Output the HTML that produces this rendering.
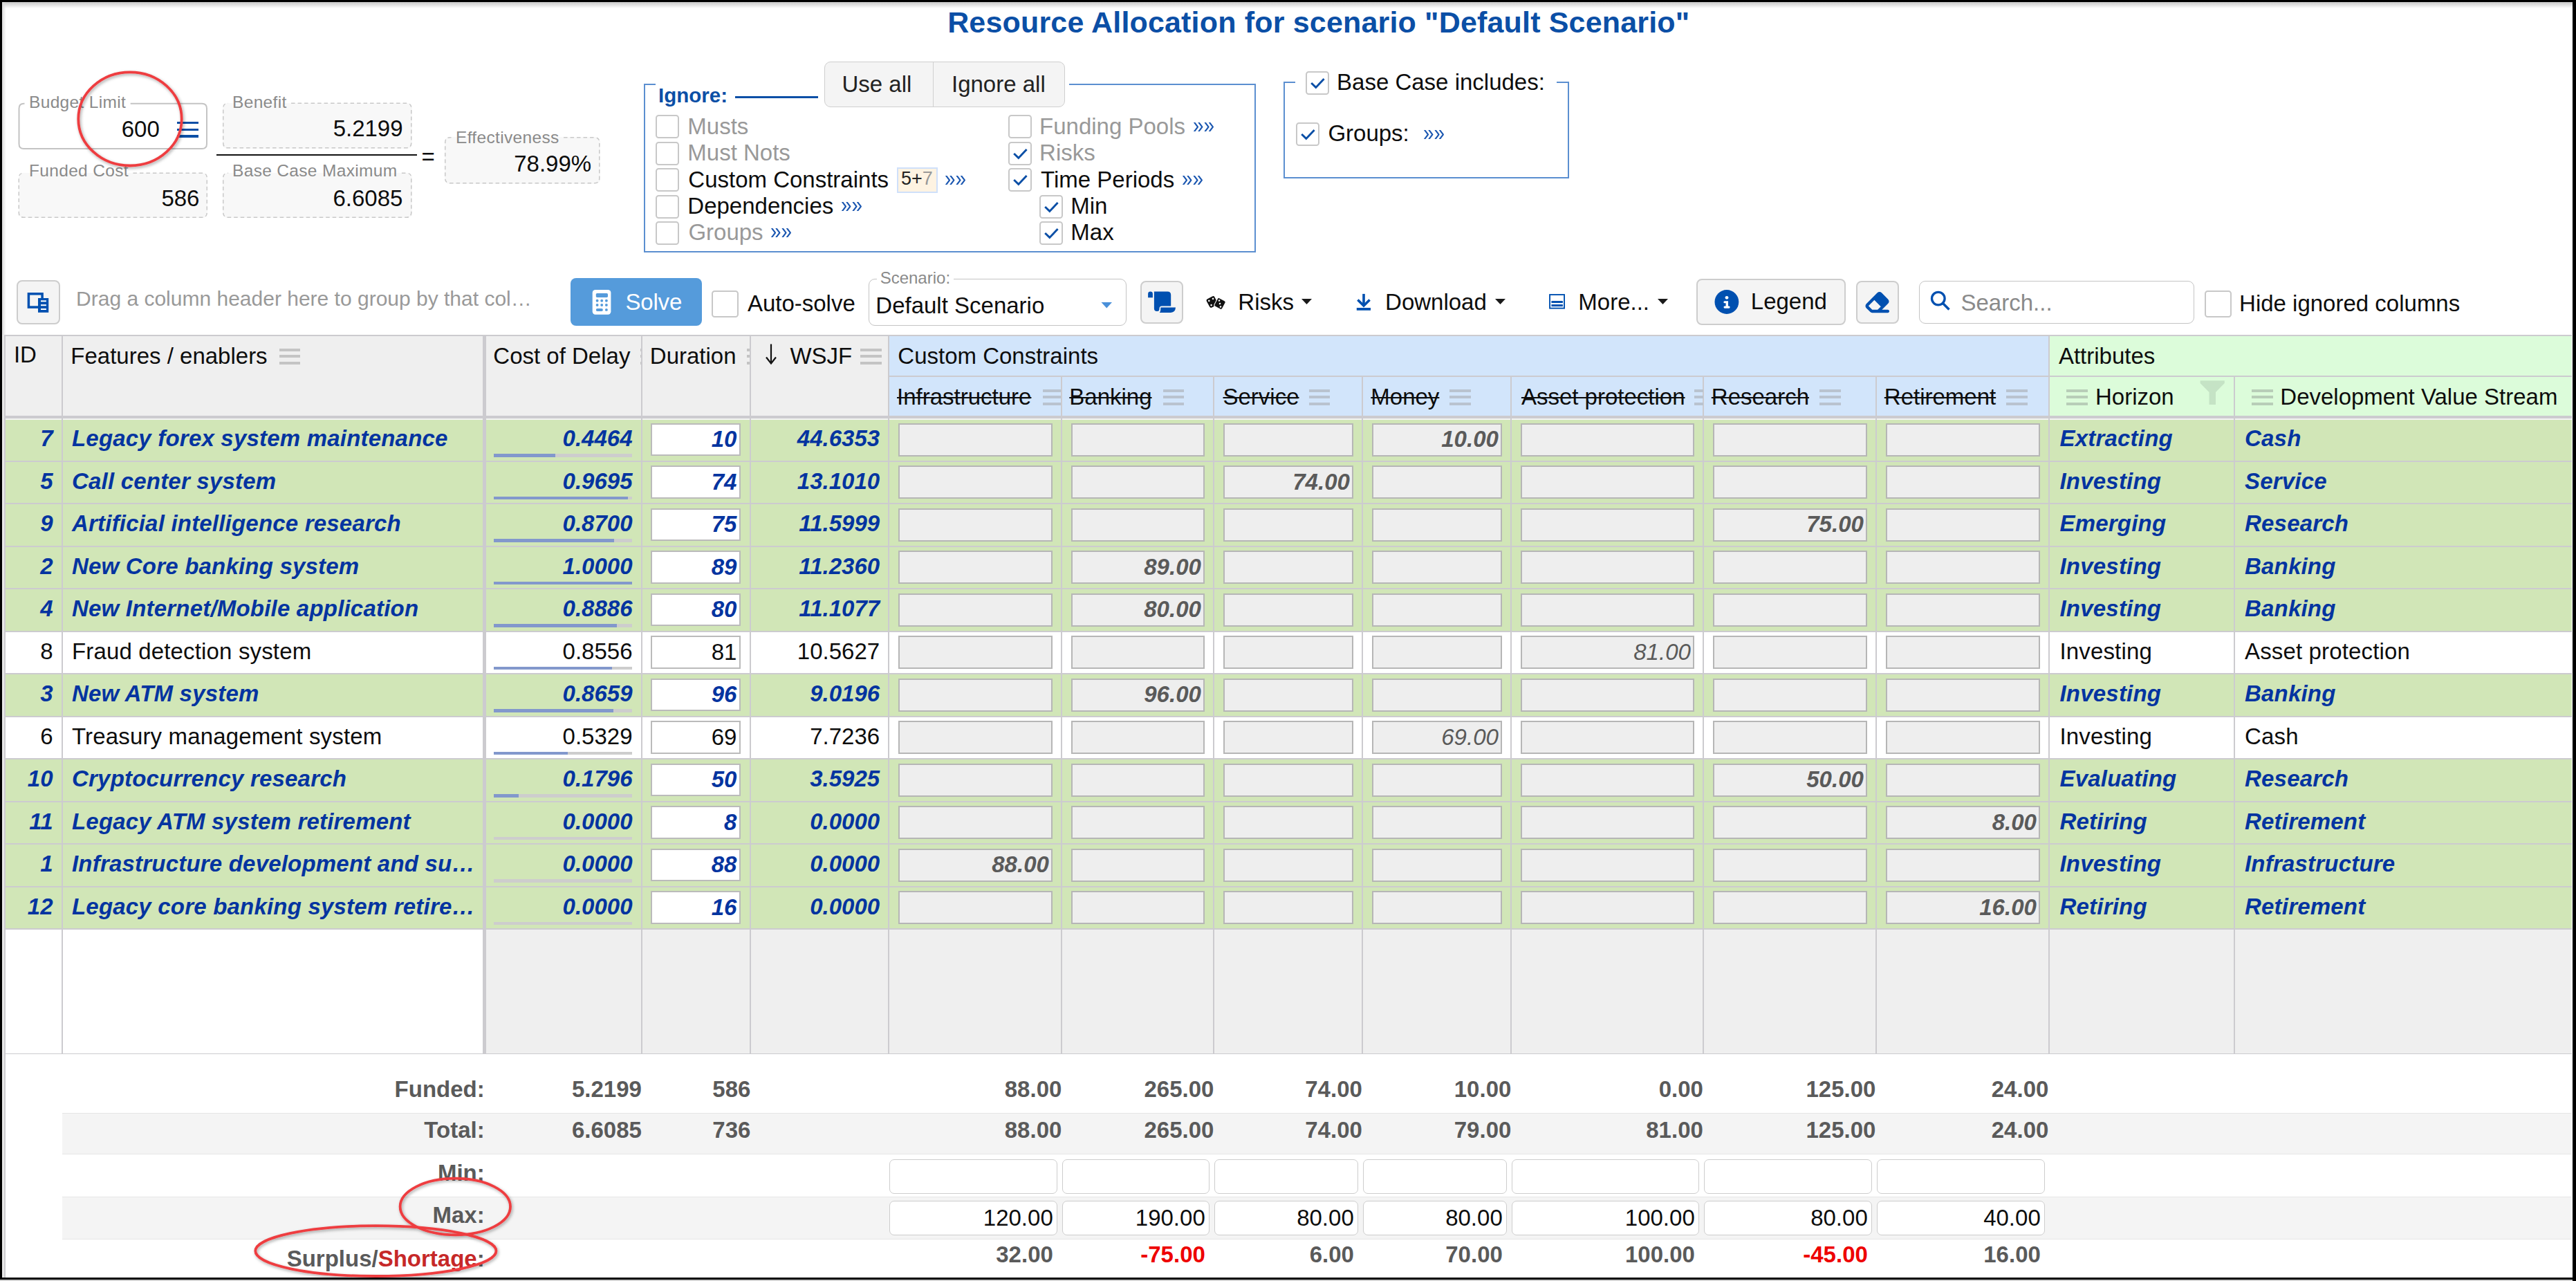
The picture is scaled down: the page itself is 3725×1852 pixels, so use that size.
<!DOCTYPE html>
<html><head><meta charset="utf-8"><title>Resource Allocation</title>
<style>
html,body{margin:0;padding:0;}
body{position:relative;width:3725px;height:1852px;overflow:hidden;background:#fff;font-family:"Liberation Sans", sans-serif;}
.t{position:absolute;white-space:nowrap;}
.r{position:absolute;box-sizing:border-box;}
</style></head><body>
<div class="t" style="top:11.4px;font-size:43px;line-height:43px;color:#0b4fa6;font-weight:bold;left:1370.13px;letter-spacing:0.175px;">Resource Allocation for scenario "Default Scenario"</div>
<div class="r" style="left:26.5px;top:148.75px;width:273.5px;height:67.25px;border-radius:7px;background:#fff;"></div>
<svg class="r" style="left:0;top:0" width="1000" height="340" viewBox="0 0 1000 340"><path d="M188.64 149.75 L292 149.75 Q299 149.75 299 156.75 L299 208 Q299 215 292 215 L34.5 215 Q27.5 215 27.5 208 L27.5 156.75 Q27.5 149.75 34.5 149.75 L35.5 149.75" fill="none" stroke="#c4c4c4" stroke-width="2" /></svg>
<div class="t" style="top:136.26px;font-size:24.5px;line-height:24.5px;color:#8a8a8a;left:42px;letter-spacing:0.33px;">Budget Limit</div>
<div class="t" style="top:170.07px;font-size:33px;line-height:33px;color:#0d0d0d;right:3494.25px;">600</div>
<div class="r" style="left:255.6px;top:175.9px;width:31.1px;height:3.5px;background:#0b4fa6;"></div>
<div class="r" style="left:255.6px;top:185.5px;width:31.1px;height:3.5px;background:#0b4fa6;"></div>
<div class="r" style="left:255.6px;top:195.1px;width:31.1px;height:3.5px;background:#0b4fa6;"></div>
<div class="r" style="left:26.5px;top:249.5px;width:273.5px;height:65.5px;border-radius:7px;background:#f8f8f8;"></div>
<svg class="r" style="left:0;top:0" width="1000" height="340" viewBox="0 0 1000 340"><path d="M192.4 250.25 L292.25 250.25 Q299.25 250.25 299.25 257.25 L299.25 307.25 Q299.25 314.25 292.25 314.25 L34.25 314.25 Q27.25 314.25 27.25 307.25 L27.25 257.25 Q27.25 250.25 34.25 250.25 L35.5 250.25" fill="none" stroke="#c9c9c9" stroke-width="1.5" stroke-dasharray="5.5 4"/></svg>
<div class="t" style="top:235.26px;font-size:24.5px;line-height:24.5px;color:#8a8a8a;left:42px;letter-spacing:0.33px;">Funded Cost</div>
<div class="t" style="top:270.07px;font-size:33px;line-height:33px;color:#0d0d0d;right:3436.55px;">586</div>
<div class="r" style="left:322px;top:148.5px;width:273.5px;height:66px;border-radius:7px;background:#f8f8f8;"></div>
<svg class="r" style="left:0;top:0" width="1000" height="340" viewBox="0 0 1000 340"><path d="M421.08 149.25 L587.75 149.25 Q594.75 149.25 594.75 156.25 L594.75 206.75 Q594.75 213.75 587.75 213.75 L329.75 213.75 Q322.75 213.75 322.75 206.75 L322.75 156.25 Q322.75 149.25 329.75 149.25 L329.5 149.25" fill="none" stroke="#c9c9c9" stroke-width="1.5" stroke-dasharray="5.5 4"/></svg>
<div class="t" style="top:135.76px;font-size:24.5px;line-height:24.5px;color:#8a8a8a;left:336px;letter-spacing:0.33px;">Benefit</div>
<div class="t" style="top:169.07px;font-size:33px;line-height:33px;color:#0d0d0d;right:3142.45px;">5.2199</div>
<div class="r" style="left:322px;top:249.5px;width:273.5px;height:65.5px;border-radius:7px;background:#f8f8f8;"></div>
<svg class="r" style="left:0;top:0" width="1000" height="340" viewBox="0 0 1000 340"><path d="M580.93 250.25 L587.75 250.25 Q594.75 250.25 594.75 257.25 L594.75 307.25 Q594.75 314.25 587.75 314.25 L329.75 314.25 Q322.75 314.25 322.75 307.25 L322.75 257.25 Q322.75 250.25 329.75 250.25 L329.5 250.25" fill="none" stroke="#c9c9c9" stroke-width="1.5" stroke-dasharray="5.5 4"/></svg>
<div class="t" style="top:235.26px;font-size:24.5px;line-height:24.5px;color:#8a8a8a;left:336px;letter-spacing:0.33px;">Base Case Maximum</div>
<div class="t" style="top:270.07px;font-size:33px;line-height:33px;color:#0d0d0d;right:3142.65px;">6.6085</div>
<div class="r" style="left:312.5px;top:222.8px;width:290.5px;height:2px;background:#111;"></div>
<div class="t" style="top:210.07px;font-size:33px;line-height:33px;color:#0d0d0d;left:609.4px;">=</div>
<div class="r" style="left:643px;top:198px;width:224.5px;height:67.5px;border-radius:7px;background:#f8f8f8;"></div>
<svg class="r" style="left:0;top:0" width="1000" height="340" viewBox="0 0 1000 340"><path d="M815.05 198.75 L859.75 198.75 Q866.75 198.75 866.75 205.75 L866.75 257.75 Q866.75 264.75 859.75 264.75 L650.75 264.75 Q643.75 264.75 643.75 257.75 L643.75 205.75 Q643.75 198.75 650.75 198.75 L652.5 198.75" fill="none" stroke="#c9c9c9" stroke-width="1.5" stroke-dasharray="5.5 4"/></svg>
<div class="t" style="top:186.76px;font-size:24.5px;line-height:24.5px;color:#8a8a8a;left:659px;letter-spacing:0.33px;">Effectiveness</div>
<div class="t" style="top:220.07px;font-size:33px;line-height:33px;color:#0d0d0d;right:2869.86px;">78.99%</div>
<div class="r" style="left:931px;top:121px;width:2px;height:243.5px;background:#5b8fd0;"></div>
<div class="r" style="left:931px;top:362.5px;width:885px;height:2px;background:#5b8fd0;"></div>
<div class="r" style="left:1814px;top:121px;width:2px;height:243.5px;background:#5b8fd0;"></div>
<div class="r" style="left:931px;top:121px;width:17px;height:2px;background:#5b8fd0;"></div>
<div class="r" style="left:1545.5px;top:121px;width:270.5px;height:2px;background:#5b8fd0;"></div>
<div class="t" style="top:123.03px;font-size:29.5px;line-height:29.5px;color:#0b4fa6;font-weight:bold;left:952.03px;">Ignore:</div>
<div class="r" style="left:1063px;top:138.5px;width:120px;height:3px;background:#0b4fa6;"></div>
<div class="r" style="left:1191.75px;top:88.75px;width:348.25px;height:66.25px;border:1.5px solid #cfcfcf;border-radius:9px;background:#f4f4f4;"></div>
<div class="r" style="left:1348.5px;top:89.5px;width:1.5px;height:65px;background:#d0d0d0;"></div>
<div class="t" style="top:105.07px;font-size:33px;line-height:33px;color:#222;left:1217.5px;">Use all</div>
<div class="t" style="top:105.07px;font-size:33px;line-height:33px;color:#222;left:1376px;">Ignore all</div>
<div class="r" style="left:948px;top:166px;width:34.4px;height:34.4px;border:2px solid #c8c8c8;border-radius:4.5px;background:#fff;"></div>
<div class="t" style="top:165.82px;font-size:33px;line-height:33px;color:#999999;left:994.3px;">Musts</div>
<div class="r" style="left:948px;top:204.5px;width:34.4px;height:34.4px;border:2px solid #c8c8c8;border-radius:4.5px;background:#fff;"></div>
<div class="t" style="top:203.57px;font-size:33px;line-height:33px;color:#999999;left:994.3px;">Must Nots</div>
<div class="r" style="left:948px;top:243px;width:34.4px;height:34.4px;border:2px solid #c8c8c8;border-radius:4.5px;background:#fff;"></div>
<div class="t" style="top:242.57px;font-size:33px;line-height:33px;color:#0d0d0d;left:995.3px;">Custom Constraints</div>
<div class="r" style="left:948px;top:281.5px;width:34.4px;height:34.4px;border:2px solid #c8c8c8;border-radius:4.5px;background:#fff;"></div>
<div class="t" style="top:280.57px;font-size:33px;line-height:33px;color:#0d0d0d;left:994.3px;">Dependencies <span style="color:#1a56b0;display:inline-block;transform:scaleX(0.845);transform-origin:0 0;margin-left:1.5px;position:relative;top:-1.5px">&raquo;&raquo;</span></div>
<div class="r" style="left:948px;top:320px;width:34.4px;height:34.4px;border:2px solid #c8c8c8;border-radius:4.5px;background:#fff;"></div>
<div class="t" style="top:318.57px;font-size:33px;line-height:33px;color:#999999;left:995.4px;">Groups <span style="color:#1a56b0;display:inline-block;transform:scaleX(0.845);transform-origin:0 0;margin-left:1.5px;position:relative;top:-1.5px">&raquo;&raquo;</span></div>
<div class="r" style="left:1297.3px;top:242px;width:58.5px;height:36.6px;background:#fef3e2;border:2px solid #cfe0fa;"></div>
<div class="t" style="top:244.64px;font-size:27px;line-height:27px;color:#222;left:1302.94px;">5+<span style="color:#999">7</span></div>
<div class="t" style="top:241.07px;font-size:33px;line-height:33px;color:#1a56b0;left:1366.2px;transform:scaleX(0.845);transform-origin:0 0;">&raquo;&raquo;</div>
<div class="r" style="left:1457.5px;top:166px;width:34.4px;height:34.4px;border:2px solid #c8c8c8;border-radius:4.5px;background:#fff;"></div>
<div class="t" style="top:165.82px;font-size:33px;line-height:33px;color:#999999;left:1503.05px;">Funding Pools <span style="color:#1a56b0;display:inline-block;transform:scaleX(0.845);transform-origin:0 0;margin-left:1.5px;position:relative;top:-1.5px">&raquo;&raquo;</span></div>
<div class="r" style="left:1457.5px;top:204.5px;width:34.4px;height:34.4px;border:2px solid #c8c8c8;border-radius:4.5px;background:#fff;"></div>
<svg class="r" style="left:1457.5px;top:204.5px;" width="34.4" height="34.4" viewBox="0 0 34.4 34.4"><path d="M8.2 17 L14.8 23.4 L26.6 11" fill="none" stroke="#0b4fa6" stroke-width="2.9" stroke-linecap="butt" stroke-linejoin="miter"/></svg>
<div class="t" style="top:203.57px;font-size:33px;line-height:33px;color:#999999;left:1503.05px;">Risks</div>
<div class="r" style="left:1457.5px;top:243px;width:34.4px;height:34.4px;border:2px solid #c8c8c8;border-radius:4.5px;background:#fff;"></div>
<svg class="r" style="left:1457.5px;top:243px;" width="34.4" height="34.4" viewBox="0 0 34.4 34.4"><path d="M8.2 17 L14.8 23.4 L26.6 11" fill="none" stroke="#0b4fa6" stroke-width="2.9" stroke-linecap="butt" stroke-linejoin="miter"/></svg>
<div class="t" style="top:242.57px;font-size:33px;line-height:33px;color:#0d0d0d;left:1505.05px;">Time Periods <span style="color:#1a56b0;display:inline-block;transform:scaleX(0.845);transform-origin:0 0;margin-left:1.5px;position:relative;top:-1.5px">&raquo;&raquo;</span></div>
<div class="r" style="left:1502.5px;top:281.5px;width:34.4px;height:34.4px;border:2px solid #c8c8c8;border-radius:4.5px;background:#fff;"></div>
<svg class="r" style="left:1502.5px;top:281.5px;" width="34.4" height="34.4" viewBox="0 0 34.4 34.4"><path d="M8.2 17 L14.8 23.4 L26.6 11" fill="none" stroke="#0b4fa6" stroke-width="2.9" stroke-linecap="butt" stroke-linejoin="miter"/></svg>
<div class="t" style="top:280.57px;font-size:33px;line-height:33px;color:#0d0d0d;left:1548.3px;">Min</div>
<div class="r" style="left:1502.5px;top:320px;width:34.4px;height:34.4px;border:2px solid #c8c8c8;border-radius:4.5px;background:#fff;"></div>
<svg class="r" style="left:1502.5px;top:320px;" width="34.4" height="34.4" viewBox="0 0 34.4 34.4"><path d="M8.2 17 L14.8 23.4 L26.6 11" fill="none" stroke="#0b4fa6" stroke-width="2.9" stroke-linecap="butt" stroke-linejoin="miter"/></svg>
<div class="t" style="top:318.57px;font-size:33px;line-height:33px;color:#0d0d0d;left:1548.3px;">Max</div>
<div class="r" style="left:1855.5px;top:118px;width:2px;height:140px;background:#5b8fd0;"></div>
<div class="r" style="left:1855.5px;top:256px;width:413.5px;height:2px;background:#5b8fd0;"></div>
<div class="r" style="left:2267px;top:118px;width:2px;height:140px;background:#5b8fd0;"></div>
<div class="r" style="left:1855.5px;top:118px;width:17.5px;height:2px;background:#5b8fd0;"></div>
<div class="r" style="left:2251px;top:118px;width:18px;height:2px;background:#5b8fd0;"></div>
<div class="r" style="left:1887.75px;top:102.5px;width:34.4px;height:34.4px;border:2px solid #c8c8c8;border-radius:4.5px;background:#fff;"></div>
<svg class="r" style="left:1887.75px;top:102.5px;" width="34.4" height="34.4" viewBox="0 0 34.4 34.4"><path d="M8.2 17 L14.8 23.4 L26.6 11" fill="none" stroke="#0b4fa6" stroke-width="2.9" stroke-linecap="butt" stroke-linejoin="miter"/></svg>
<div class="t" style="top:102.07px;font-size:33px;line-height:33px;color:#0d0d0d;left:1933.05px;">Base Case includes:</div>
<div class="r" style="left:1873.5px;top:176.5px;width:34.4px;height:34.4px;border:2px solid #c8c8c8;border-radius:4.5px;background:#fff;"></div>
<svg class="r" style="left:1873.5px;top:176.5px;" width="34.4" height="34.4" viewBox="0 0 34.4 34.4"><path d="M8.2 17 L14.8 23.4 L26.6 11" fill="none" stroke="#0b4fa6" stroke-width="2.9" stroke-linecap="butt" stroke-linejoin="miter"/></svg>
<div class="t" style="top:176.07px;font-size:33px;line-height:33px;color:#0d0d0d;left:1920.4px;">Groups:</div>
<div class="t" style="top:174.57px;font-size:33px;line-height:33px;color:#1a56b0;left:2057.95px;transform:scaleX(0.845);transform-origin:0 0;">&raquo;&raquo;</div>
<div class="r" style="left:23.5px;top:405.25px;width:63.25px;height:63.25px;border:2px solid #cdcdcd;border-radius:8px;background:#f4f4f4;"></div>
<svg class="r" style="left:0;top:0" width="100" height="480" viewBox="0 0 100 480"><rect x="41.4" y="424.8" width="19.7" height="19.3" fill="none" stroke="#0050b0" stroke-width="3.5"/><rect x="55" y="431" width="15.25" height="20.8" fill="#0050b0"/><rect x="59" y="434.3" width="7.9" height="2" fill="#fff"/><rect x="59" y="440.2" width="7.9" height="2" fill="#fff"/><rect x="59" y="446" width="7.9" height="2" fill="#fff"/></svg>
<div class="t" style="top:416.61px;font-size:30px;line-height:30px;color:#999999;left:110.05px;">Drag a column header here to group by that col…</div>
<div class="r" style="left:825px;top:402px;width:190px;height:69px;border-radius:8px;background:#559bdb;"></div>
<svg class="r" style="left:850px;top:415px" width="40" height="45" viewBox="850 415 40 45"><rect x="856.7" y="419" width="26.7" height="35.7" rx="4.2" fill="#fff"/><rect x="861.8" y="424" width="17.2" height="5.9" rx="1.6" fill="#559bdb"/><circle cx="863.6" cy="434.7" r="1.95" fill="#559bdb"/><circle cx="870.2" cy="434.7" r="1.95" fill="#559bdb"/><circle cx="876.9" cy="434.7" r="1.95" fill="#559bdb"/><circle cx="863.6" cy="441" r="1.95" fill="#559bdb"/><circle cx="870.2" cy="441" r="1.95" fill="#559bdb"/><circle cx="876.9" cy="441" r="1.95" fill="#559bdb"/><rect x="861.8" y="445.9" width="10.1" height="4" rx="2" fill="#559bdb"/><circle cx="876.9" cy="447.9" r="1.95" fill="#559bdb"/></svg>
<div class="t" style="top:419.57px;font-size:33px;line-height:33px;color:#fff;left:904.5px;letter-spacing:-0.2px;">Solve</div>
<div class="r" style="left:1028.5px;top:420px;width:39px;height:39px;border:2px solid #c8c8c8;border-radius:4.5px;background:#fff;"></div>
<div class="t" style="top:422.07px;font-size:33px;line-height:33px;color:#0d0d0d;left:1080.9px;">Auto-solve</div>
<div class="r" style="left:1255.75px;top:403px;width:373.25px;height:68px;border:1.5px solid #c4c4c4;border-radius:9px;background:#fff;"></div>
<div class="t" style="top:390.18px;font-size:24px;line-height:24px;color:#8a8a8a;left:1272.66px;background:#fff;padding:0 5px;margin-left:-5px;">Scenario:</div>
<div class="t" style="top:424.57px;font-size:33px;line-height:33px;color:#0d0d0d;left:1266.3px;">Default Scenario</div>
<svg class="r" style="left:1590px;top:435px" width="20" height="12" viewBox="1590 435 20 12"><path d="M1592.5 437 L1608 437 L1600.25 445.5 Z" fill="#4a90d9"/></svg>
<div class="r" style="left:1648.75px;top:405.75px;width:62.25px;height:62.25px;border:2px solid #cdcdcd;border-radius:8px;background:#f4f4f4;"></div>
<svg class="r" style="left:1655px;top:415px" width="50" height="42" viewBox="1655 415 50 42"><path d="M1660.1 430.2 L1660.1 425 Q1660.1 421.6 1663.5 421.6 Q1666.9 421.6 1666.9 425 L1666.9 430.2 Z" fill="#0050b0"/><path d="M1668.9 421.6 L1688.2 421.6 Q1693.2 421.6 1693.2 426.6 L1693.2 442.5 L1680 442.5 Q1676.5 442.5 1676.5 446 L1676.5 446.5 Q1676.5 450 1673.5 450 L1672.9 450 Q1668.9 450 1668.9 446 Z" fill="#0050b0"/><path d="M1678.3 444.6 L1700 444.6 Q1699.5 451.9 1693 451.9 L1676.8 451.9 Q1678.3 450 1678.3 447 Z" fill="#0050b0"/></svg>
<svg class="r" style="left:1740px;top:420px" width="40" height="34" viewBox="1740 420 40 34"><g transform="rotate(-28 1753 437)"><rect x="1746.5" y="429.5" width="13" height="14" rx="2.5" fill="#111"/><circle cx="1749.8" cy="433" r="1.3" fill="#fff"/><circle cx="1756.3" cy="433" r="1.3" fill="#fff"/><circle cx="1749.8" cy="440" r="1.3" fill="#fff"/></g><g transform="rotate(28 1764 439)"><rect x="1757.5" y="432" width="13" height="14" rx="2.5" fill="#111" stroke="#fff" stroke-width="1"/><circle cx="1761" cy="435.5" r="1.3" fill="#fff"/><circle cx="1764" cy="439" r="1.3" fill="#fff"/><circle cx="1767" cy="442.5" r="1.3" fill="#fff"/></g></svg>
<div class="t" style="top:419.57px;font-size:33px;line-height:33px;color:#0d0d0d;left:1790.3px;">Risks</div>
<svg class="r" style="left:1881px;top:431px" width="18" height="11" viewBox="1881 431 18 11"><path d="M1882 432 L1897 432 L1889.5 440 Z" fill="#1a1a1a"/></svg>
<svg class="r" style="left:1958px;top:420px" width="28" height="32" viewBox="1958 420 28 32"><rect x="1970.2" y="424.9" width="3.6" height="15" fill="#0050b0"/><path d="M1963.4 433.5 L1972 442 L1980.6 433.5" fill="none" stroke="#0050b0" stroke-width="3.6"/><rect x="1961.8" y="445" width="20.2" height="3.75" fill="#0050b0"/></svg>
<div class="t" style="top:419.57px;font-size:33px;line-height:33px;color:#0d0d0d;left:2003.05px;">Download</div>
<svg class="r" style="left:2160.75px;top:431px" width="18" height="11" viewBox="2160.75 431 18 11"><path d="M2161.75 432 L2176.75 432 L2169.25 440 Z" fill="#1a1a1a"/></svg>
<svg class="r" style="left:2236px;top:420px" width="32" height="30" viewBox="2236 420 32 30"><rect x="2241.05" y="426.05" width="21" height="19.6" fill="none" stroke="#0050b0" stroke-width="1.9"/><rect x="2243.4" y="435" width="16.5" height="3" fill="#0050b0"/><rect x="2243.4" y="440.1" width="16.5" height="3" fill="#0050b0"/></svg>
<div class="t" style="top:419.57px;font-size:33px;line-height:33px;color:#0d0d0d;left:2282.3px;">More...</div>
<svg class="r" style="left:2396px;top:431px" width="18" height="11" viewBox="2396 431 18 11"><path d="M2397 432 L2412 432 L2404.5 440 Z" fill="#1a1a1a"/></svg>
<div class="r" style="left:2452.5px;top:402.5px;width:216.5px;height:67.5px;border:2px solid #cdcdcd;border-radius:8px;background:#f4f4f4;"></div>
<svg class="r" style="left:2475px;top:415px" width="44" height="44" viewBox="2475 415 44 44"><circle cx="2496.9" cy="436.5" r="17.4" fill="#0050b0"/><circle cx="2497" cy="430.3" r="2.4" fill="#fff"/><path d="M2493.8 435.2 L2499 435.2 L2499 442.5 L2500.2 442.5 Q2501.6 442.5 2501.6 444.1 Q2501.6 445.7 2500.2 445.7 L2494 445.7 Q2492.5 445.7 2492.5 444.1 Q2492.5 442.5 2494 442.5 L2495.6 442.5 L2495.6 438.3 L2493.8 438.3 Q2492.4 438.3 2492.4 436.75 Q2492.4 435.2 2493.8 435.2 Z" fill="#fff"/></svg>
<div class="t" style="top:419.07px;font-size:33px;line-height:33px;color:#0d0d0d;left:2531.8px;">Legend</div>
<div class="r" style="left:2683.75px;top:405.75px;width:62.25px;height:62.25px;border:2px solid #cdcdcd;border-radius:8px;background:#f4f4f4;"></div>
<svg class="r" style="left:2690px;top:414px" width="50" height="46" viewBox="2690 414 50 46"><g transform="translate(2694.86 419.36) scale(0.0683)"><path d="M290.7 57.4L57.4 290.7c-25 25-25 65.5 0 90.5l80 80c12 12 28.3 18.7 45.3 18.7H288h9.4H512c17.7 0 32-14.3 32-32s-14.3-32-32-32H387.9L518.6 285.3c25-25 25-65.5 0-90.5L381.3 57.4c-25-25-65.5-25-90.5 0zM297.4 416H288l-105.4 0-80-80L227.3 211.3 364.7 348.7 297.4 416z" fill="#0050b0"/></g></svg>
<div class="r" style="left:2774.5px;top:405.75px;width:398.75px;height:62.25px;border:1.5px solid #c4c4c4;border-radius:9px;background:#fff;"></div>
<svg class="r" style="left:2786px;top:416px" width="40" height="38" viewBox="2786 416 40 38"><circle cx="2802.8" cy="431.6" r="9.3" fill="none" stroke="#0050b0" stroke-width="3.3"/><path d="M2809.5 438.5 L2818.5 447.5" stroke="#0050b0" stroke-width="3.6"/></svg>
<div class="t" style="top:420.82px;font-size:33px;line-height:33px;color:#8a8a8a;left:2835.5px;">Search...</div>
<div class="r" style="left:3187.5px;top:419.5px;width:39px;height:39px;border:2px solid #c8c8c8;border-radius:4.5px;background:#fff;"></div>
<div class="t" style="top:422.07px;font-size:33px;line-height:33px;color:#0d0d0d;left:3238.05px;">Hide ignored columns</div>
<div class="r" style="left:8px;top:486px;width:1276px;height:115px;background:#efefef;"></div>
<div class="r" style="left:1286px;top:486px;width:1676px;height:115px;background:#d2e5fb;"></div>
<div class="r" style="left:2964px;top:486px;width:754.5px;height:115px;background:#dcfcda;"></div>
<div class="r" style="left:1286px;top:543px;width:2432.5px;height:2px;background:#cccbcf;"></div>
<div class="r" style="left:8px;top:606px;width:3710.5px;height:59.5px;background:#d1e6b7;"></div>
<div class="r" style="left:8px;top:665.5px;width:3710.5px;height:2px;background:#cccbcf;"></div>
<div class="t" style="top:617.07px;font-size:33px;line-height:33px;color:#0434a0;font-weight:bold;font-style:italic;right:3648.5px;">7</div>
<div class="t" style="top:617.07px;font-size:33px;line-height:33px;color:#0434a0;font-weight:bold;font-style:italic;left:104px;letter-spacing:0.2px;">Legacy forex system maintenance</div>
<div class="t" style="top:617.07px;font-size:33px;line-height:33px;color:#0434a0;font-weight:bold;font-style:italic;right:2810.5px;">0.4464</div>
<div class="r" style="left:713.75px;top:656px;width:200.5px;height:4.75px;background:#cdcdcd;"></div>
<div class="r" style="left:713.75px;top:656px;width:89.5px;height:4.75px;background:#8298cc;"></div>
<div class="r" style="left:941.25px;top:611.5px;width:130px;height:47.75px;background:#fff;border:2px solid #bbbbbb;"></div>
<div class="t" style="top:618.07px;font-size:33px;line-height:33px;color:#0434a0;font-weight:bold;font-style:italic;right:2659.65px;">10</div>
<div class="t" style="top:617.07px;font-size:33px;line-height:33px;color:#0434a0;font-weight:bold;font-style:italic;right:2452.9px;">44.6353</div>
<div class="r" style="left:1299px;top:611.5px;width:223px;height:48px;background:#eeeeee;border:2px solid #b6b6b6;"></div>
<div class="r" style="left:1549px;top:611.5px;width:193px;height:48px;background:#eeeeee;border:2px solid #b6b6b6;"></div>
<div class="r" style="left:1769px;top:611.5px;width:188px;height:48px;background:#eeeeee;border:2px solid #b6b6b6;"></div>
<div class="r" style="left:1984px;top:611.5px;width:188px;height:48px;background:#eeeeee;border:2px solid #b6b6b6;"></div>
<div class="t" style="top:618.07px;font-size:33px;line-height:33px;color:#5a5a5a;font-weight:bold;font-style:italic;right:1558.15px;">10.00</div>
<div class="r" style="left:2199px;top:611.5px;width:251px;height:48px;background:#eeeeee;border:2px solid #b6b6b6;"></div>
<div class="r" style="left:2477px;top:611.5px;width:223px;height:48px;background:#eeeeee;border:2px solid #b6b6b6;"></div>
<div class="r" style="left:2727px;top:611.5px;width:223px;height:48px;background:#eeeeee;border:2px solid #b6b6b6;"></div>
<div class="t" style="top:617.07px;font-size:33px;line-height:33px;color:#0434a0;font-weight:bold;font-style:italic;left:2978.5px;letter-spacing:0.2px;">Extracting</div>
<div class="t" style="top:617.07px;font-size:33px;line-height:33px;color:#0434a0;font-weight:bold;font-style:italic;left:3246px;letter-spacing:0.2px;">Cash</div>
<div class="r" style="left:8px;top:667.5px;width:3710.5px;height:59.5px;background:#d1e6b7;"></div>
<div class="r" style="left:8px;top:727px;width:3710.5px;height:2px;background:#cccbcf;"></div>
<div class="t" style="top:678.57px;font-size:33px;line-height:33px;color:#0434a0;font-weight:bold;font-style:italic;right:3648.5px;">5</div>
<div class="t" style="top:678.57px;font-size:33px;line-height:33px;color:#0434a0;font-weight:bold;font-style:italic;left:104px;letter-spacing:0.2px;">Call center system</div>
<div class="t" style="top:678.57px;font-size:33px;line-height:33px;color:#0434a0;font-weight:bold;font-style:italic;right:2810.5px;">0.9695</div>
<div class="r" style="left:713.75px;top:717.5px;width:200.5px;height:4.75px;background:#cdcdcd;"></div>
<div class="r" style="left:713.75px;top:717.5px;width:194.38px;height:4.75px;background:#8298cc;"></div>
<div class="r" style="left:941.25px;top:673px;width:130px;height:47.75px;background:#fff;border:2px solid #bbbbbb;"></div>
<div class="t" style="top:679.57px;font-size:33px;line-height:33px;color:#0434a0;font-weight:bold;font-style:italic;right:2659.65px;">74</div>
<div class="t" style="top:678.57px;font-size:33px;line-height:33px;color:#0434a0;font-weight:bold;font-style:italic;right:2452.9px;">13.1010</div>
<div class="r" style="left:1299px;top:673px;width:223px;height:48px;background:#eeeeee;border:2px solid #b6b6b6;"></div>
<div class="r" style="left:1549px;top:673px;width:193px;height:48px;background:#eeeeee;border:2px solid #b6b6b6;"></div>
<div class="r" style="left:1769px;top:673px;width:188px;height:48px;background:#eeeeee;border:2px solid #b6b6b6;"></div>
<div class="t" style="top:679.57px;font-size:33px;line-height:33px;color:#5a5a5a;font-weight:bold;font-style:italic;right:1773.15px;">74.00</div>
<div class="r" style="left:1984px;top:673px;width:188px;height:48px;background:#eeeeee;border:2px solid #b6b6b6;"></div>
<div class="r" style="left:2199px;top:673px;width:251px;height:48px;background:#eeeeee;border:2px solid #b6b6b6;"></div>
<div class="r" style="left:2477px;top:673px;width:223px;height:48px;background:#eeeeee;border:2px solid #b6b6b6;"></div>
<div class="r" style="left:2727px;top:673px;width:223px;height:48px;background:#eeeeee;border:2px solid #b6b6b6;"></div>
<div class="t" style="top:678.57px;font-size:33px;line-height:33px;color:#0434a0;font-weight:bold;font-style:italic;left:2978.5px;letter-spacing:0.2px;">Investing</div>
<div class="t" style="top:678.57px;font-size:33px;line-height:33px;color:#0434a0;font-weight:bold;font-style:italic;left:3246px;letter-spacing:0.2px;">Service</div>
<div class="r" style="left:8px;top:729px;width:3710.5px;height:59.5px;background:#d1e6b7;"></div>
<div class="r" style="left:8px;top:788.5px;width:3710.5px;height:2px;background:#cccbcf;"></div>
<div class="t" style="top:740.07px;font-size:33px;line-height:33px;color:#0434a0;font-weight:bold;font-style:italic;right:3648.5px;">9</div>
<div class="t" style="top:740.07px;font-size:33px;line-height:33px;color:#0434a0;font-weight:bold;font-style:italic;left:104px;letter-spacing:0.2px;">Artificial intelligence research</div>
<div class="t" style="top:740.07px;font-size:33px;line-height:33px;color:#0434a0;font-weight:bold;font-style:italic;right:2810.5px;">0.8700</div>
<div class="r" style="left:713.75px;top:779px;width:200.5px;height:4.75px;background:#cdcdcd;"></div>
<div class="r" style="left:713.75px;top:779px;width:174.43px;height:4.75px;background:#8298cc;"></div>
<div class="r" style="left:941.25px;top:734.5px;width:130px;height:47.75px;background:#fff;border:2px solid #bbbbbb;"></div>
<div class="t" style="top:741.07px;font-size:33px;line-height:33px;color:#0434a0;font-weight:bold;font-style:italic;right:2659.65px;">75</div>
<div class="t" style="top:740.07px;font-size:33px;line-height:33px;color:#0434a0;font-weight:bold;font-style:italic;right:2452.9px;">11.5999</div>
<div class="r" style="left:1299px;top:734.5px;width:223px;height:48px;background:#eeeeee;border:2px solid #b6b6b6;"></div>
<div class="r" style="left:1549px;top:734.5px;width:193px;height:48px;background:#eeeeee;border:2px solid #b6b6b6;"></div>
<div class="r" style="left:1769px;top:734.5px;width:188px;height:48px;background:#eeeeee;border:2px solid #b6b6b6;"></div>
<div class="r" style="left:1984px;top:734.5px;width:188px;height:48px;background:#eeeeee;border:2px solid #b6b6b6;"></div>
<div class="r" style="left:2199px;top:734.5px;width:251px;height:48px;background:#eeeeee;border:2px solid #b6b6b6;"></div>
<div class="r" style="left:2477px;top:734.5px;width:223px;height:48px;background:#eeeeee;border:2px solid #b6b6b6;"></div>
<div class="t" style="top:741.07px;font-size:33px;line-height:33px;color:#5a5a5a;font-weight:bold;font-style:italic;right:1030.15px;">75.00</div>
<div class="r" style="left:2727px;top:734.5px;width:223px;height:48px;background:#eeeeee;border:2px solid #b6b6b6;"></div>
<div class="t" style="top:740.07px;font-size:33px;line-height:33px;color:#0434a0;font-weight:bold;font-style:italic;left:2978.5px;letter-spacing:0.2px;">Emerging</div>
<div class="t" style="top:740.07px;font-size:33px;line-height:33px;color:#0434a0;font-weight:bold;font-style:italic;left:3246px;letter-spacing:0.2px;">Research</div>
<div class="r" style="left:8px;top:790.5px;width:3710.5px;height:59.5px;background:#d1e6b7;"></div>
<div class="r" style="left:8px;top:850px;width:3710.5px;height:2px;background:#cccbcf;"></div>
<div class="t" style="top:801.57px;font-size:33px;line-height:33px;color:#0434a0;font-weight:bold;font-style:italic;right:3648.5px;">2</div>
<div class="t" style="top:801.57px;font-size:33px;line-height:33px;color:#0434a0;font-weight:bold;font-style:italic;left:104px;letter-spacing:0.2px;">New Core banking system</div>
<div class="t" style="top:801.57px;font-size:33px;line-height:33px;color:#0434a0;font-weight:bold;font-style:italic;right:2810.5px;">1.0000</div>
<div class="r" style="left:713.75px;top:840.5px;width:200.5px;height:4.75px;background:#cdcdcd;"></div>
<div class="r" style="left:713.75px;top:840.5px;width:200.5px;height:4.75px;background:#8298cc;"></div>
<div class="r" style="left:941.25px;top:796px;width:130px;height:47.75px;background:#fff;border:2px solid #bbbbbb;"></div>
<div class="t" style="top:802.57px;font-size:33px;line-height:33px;color:#0434a0;font-weight:bold;font-style:italic;right:2659.65px;">89</div>
<div class="t" style="top:801.57px;font-size:33px;line-height:33px;color:#0434a0;font-weight:bold;font-style:italic;right:2452.9px;">11.2360</div>
<div class="r" style="left:1299px;top:796px;width:223px;height:48px;background:#eeeeee;border:2px solid #b6b6b6;"></div>
<div class="r" style="left:1549px;top:796px;width:193px;height:48px;background:#eeeeee;border:2px solid #b6b6b6;"></div>
<div class="t" style="top:802.57px;font-size:33px;line-height:33px;color:#5a5a5a;font-weight:bold;font-style:italic;right:1988.15px;">89.00</div>
<div class="r" style="left:1769px;top:796px;width:188px;height:48px;background:#eeeeee;border:2px solid #b6b6b6;"></div>
<div class="r" style="left:1984px;top:796px;width:188px;height:48px;background:#eeeeee;border:2px solid #b6b6b6;"></div>
<div class="r" style="left:2199px;top:796px;width:251px;height:48px;background:#eeeeee;border:2px solid #b6b6b6;"></div>
<div class="r" style="left:2477px;top:796px;width:223px;height:48px;background:#eeeeee;border:2px solid #b6b6b6;"></div>
<div class="r" style="left:2727px;top:796px;width:223px;height:48px;background:#eeeeee;border:2px solid #b6b6b6;"></div>
<div class="t" style="top:801.57px;font-size:33px;line-height:33px;color:#0434a0;font-weight:bold;font-style:italic;left:2978.5px;letter-spacing:0.2px;">Investing</div>
<div class="t" style="top:801.57px;font-size:33px;line-height:33px;color:#0434a0;font-weight:bold;font-style:italic;left:3246px;letter-spacing:0.2px;">Banking</div>
<div class="r" style="left:8px;top:852px;width:3710.5px;height:59.5px;background:#d1e6b7;"></div>
<div class="r" style="left:8px;top:911.5px;width:3710.5px;height:2px;background:#cccbcf;"></div>
<div class="t" style="top:863.07px;font-size:33px;line-height:33px;color:#0434a0;font-weight:bold;font-style:italic;right:3648.5px;">4</div>
<div class="t" style="top:863.07px;font-size:33px;line-height:33px;color:#0434a0;font-weight:bold;font-style:italic;left:104px;letter-spacing:0.2px;">New Internet/Mobile application</div>
<div class="t" style="top:863.07px;font-size:33px;line-height:33px;color:#0434a0;font-weight:bold;font-style:italic;right:2810.5px;">0.8886</div>
<div class="r" style="left:713.75px;top:902px;width:200.5px;height:4.75px;background:#cdcdcd;"></div>
<div class="r" style="left:713.75px;top:902px;width:178.16px;height:4.75px;background:#8298cc;"></div>
<div class="r" style="left:941.25px;top:857.5px;width:130px;height:47.75px;background:#fff;border:2px solid #bbbbbb;"></div>
<div class="t" style="top:864.07px;font-size:33px;line-height:33px;color:#0434a0;font-weight:bold;font-style:italic;right:2659.65px;">80</div>
<div class="t" style="top:863.07px;font-size:33px;line-height:33px;color:#0434a0;font-weight:bold;font-style:italic;right:2452.9px;">11.1077</div>
<div class="r" style="left:1299px;top:857.5px;width:223px;height:48px;background:#eeeeee;border:2px solid #b6b6b6;"></div>
<div class="r" style="left:1549px;top:857.5px;width:193px;height:48px;background:#eeeeee;border:2px solid #b6b6b6;"></div>
<div class="t" style="top:864.07px;font-size:33px;line-height:33px;color:#5a5a5a;font-weight:bold;font-style:italic;right:1988.15px;">80.00</div>
<div class="r" style="left:1769px;top:857.5px;width:188px;height:48px;background:#eeeeee;border:2px solid #b6b6b6;"></div>
<div class="r" style="left:1984px;top:857.5px;width:188px;height:48px;background:#eeeeee;border:2px solid #b6b6b6;"></div>
<div class="r" style="left:2199px;top:857.5px;width:251px;height:48px;background:#eeeeee;border:2px solid #b6b6b6;"></div>
<div class="r" style="left:2477px;top:857.5px;width:223px;height:48px;background:#eeeeee;border:2px solid #b6b6b6;"></div>
<div class="r" style="left:2727px;top:857.5px;width:223px;height:48px;background:#eeeeee;border:2px solid #b6b6b6;"></div>
<div class="t" style="top:863.07px;font-size:33px;line-height:33px;color:#0434a0;font-weight:bold;font-style:italic;left:2978.5px;letter-spacing:0.2px;">Investing</div>
<div class="t" style="top:863.07px;font-size:33px;line-height:33px;color:#0434a0;font-weight:bold;font-style:italic;left:3246px;letter-spacing:0.2px;">Banking</div>
<div class="r" style="left:8px;top:913.5px;width:3710.5px;height:59.5px;background:#ffffff;"></div>
<div class="r" style="left:8px;top:973px;width:3710.5px;height:2px;background:#cccbcf;"></div>
<div class="t" style="top:924.57px;font-size:33px;line-height:33px;color:#0d0d0d;right:3648.5px;">8</div>
<div class="t" style="top:924.57px;font-size:33px;line-height:33px;color:#0d0d0d;left:104px;letter-spacing:0.15px;">Fraud detection system</div>
<div class="t" style="top:924.57px;font-size:33px;line-height:33px;color:#0d0d0d;right:2810.5px;">0.8556</div>
<div class="r" style="left:713.75px;top:963.5px;width:200.5px;height:4.75px;background:#cdcdcd;"></div>
<div class="r" style="left:713.75px;top:963.5px;width:171.55px;height:4.75px;background:#8298cc;"></div>
<div class="r" style="left:941.25px;top:919px;width:130px;height:47.75px;background:#fff;border:2px solid #bbbbbb;"></div>
<div class="t" style="top:925.57px;font-size:33px;line-height:33px;color:#0d0d0d;right:2659.65px;">81</div>
<div class="t" style="top:924.57px;font-size:33px;line-height:33px;color:#0d0d0d;right:2452.9px;">10.5627</div>
<div class="r" style="left:1299px;top:919px;width:223px;height:48px;background:#eeeeee;border:2px solid #b6b6b6;"></div>
<div class="r" style="left:1549px;top:919px;width:193px;height:48px;background:#eeeeee;border:2px solid #b6b6b6;"></div>
<div class="r" style="left:1769px;top:919px;width:188px;height:48px;background:#eeeeee;border:2px solid #b6b6b6;"></div>
<div class="r" style="left:1984px;top:919px;width:188px;height:48px;background:#eeeeee;border:2px solid #b6b6b6;"></div>
<div class="r" style="left:2199px;top:919px;width:251px;height:48px;background:#eeeeee;border:2px solid #b6b6b6;"></div>
<div class="t" style="top:925.57px;font-size:33px;line-height:33px;color:#5a5a5a;font-style:italic;right:1280.15px;">81.00</div>
<div class="r" style="left:2477px;top:919px;width:223px;height:48px;background:#eeeeee;border:2px solid #b6b6b6;"></div>
<div class="r" style="left:2727px;top:919px;width:223px;height:48px;background:#eeeeee;border:2px solid #b6b6b6;"></div>
<div class="t" style="top:924.57px;font-size:33px;line-height:33px;color:#0d0d0d;left:2978.5px;letter-spacing:0.15px;">Investing</div>
<div class="t" style="top:924.57px;font-size:33px;line-height:33px;color:#0d0d0d;left:3246px;letter-spacing:0.15px;">Asset protection</div>
<div class="r" style="left:8px;top:975px;width:3710.5px;height:59.5px;background:#d1e6b7;"></div>
<div class="r" style="left:8px;top:1034.5px;width:3710.5px;height:2px;background:#cccbcf;"></div>
<div class="t" style="top:986.07px;font-size:33px;line-height:33px;color:#0434a0;font-weight:bold;font-style:italic;right:3648.5px;">3</div>
<div class="t" style="top:986.07px;font-size:33px;line-height:33px;color:#0434a0;font-weight:bold;font-style:italic;left:104px;letter-spacing:0.2px;">New ATM system</div>
<div class="t" style="top:986.07px;font-size:33px;line-height:33px;color:#0434a0;font-weight:bold;font-style:italic;right:2810.5px;">0.8659</div>
<div class="r" style="left:713.75px;top:1025px;width:200.5px;height:4.75px;background:#cdcdcd;"></div>
<div class="r" style="left:713.75px;top:1025px;width:173.61px;height:4.75px;background:#8298cc;"></div>
<div class="r" style="left:941.25px;top:980.5px;width:130px;height:47.75px;background:#fff;border:2px solid #bbbbbb;"></div>
<div class="t" style="top:987.07px;font-size:33px;line-height:33px;color:#0434a0;font-weight:bold;font-style:italic;right:2659.65px;">96</div>
<div class="t" style="top:986.07px;font-size:33px;line-height:33px;color:#0434a0;font-weight:bold;font-style:italic;right:2452.9px;">9.0196</div>
<div class="r" style="left:1299px;top:980.5px;width:223px;height:48px;background:#eeeeee;border:2px solid #b6b6b6;"></div>
<div class="r" style="left:1549px;top:980.5px;width:193px;height:48px;background:#eeeeee;border:2px solid #b6b6b6;"></div>
<div class="t" style="top:987.07px;font-size:33px;line-height:33px;color:#5a5a5a;font-weight:bold;font-style:italic;right:1988.15px;">96.00</div>
<div class="r" style="left:1769px;top:980.5px;width:188px;height:48px;background:#eeeeee;border:2px solid #b6b6b6;"></div>
<div class="r" style="left:1984px;top:980.5px;width:188px;height:48px;background:#eeeeee;border:2px solid #b6b6b6;"></div>
<div class="r" style="left:2199px;top:980.5px;width:251px;height:48px;background:#eeeeee;border:2px solid #b6b6b6;"></div>
<div class="r" style="left:2477px;top:980.5px;width:223px;height:48px;background:#eeeeee;border:2px solid #b6b6b6;"></div>
<div class="r" style="left:2727px;top:980.5px;width:223px;height:48px;background:#eeeeee;border:2px solid #b6b6b6;"></div>
<div class="t" style="top:986.07px;font-size:33px;line-height:33px;color:#0434a0;font-weight:bold;font-style:italic;left:2978.5px;letter-spacing:0.2px;">Investing</div>
<div class="t" style="top:986.07px;font-size:33px;line-height:33px;color:#0434a0;font-weight:bold;font-style:italic;left:3246px;letter-spacing:0.2px;">Banking</div>
<div class="r" style="left:8px;top:1036.5px;width:3710.5px;height:59.5px;background:#ffffff;"></div>
<div class="r" style="left:8px;top:1096px;width:3710.5px;height:2px;background:#cccbcf;"></div>
<div class="t" style="top:1047.57px;font-size:33px;line-height:33px;color:#0d0d0d;right:3648.5px;">6</div>
<div class="t" style="top:1047.57px;font-size:33px;line-height:33px;color:#0d0d0d;left:104px;letter-spacing:0.15px;">Treasury management system</div>
<div class="t" style="top:1047.57px;font-size:33px;line-height:33px;color:#0d0d0d;right:2810.5px;">0.5329</div>
<div class="r" style="left:713.75px;top:1086.5px;width:200.5px;height:4.75px;background:#cdcdcd;"></div>
<div class="r" style="left:713.75px;top:1086.5px;width:106.85px;height:4.75px;background:#8298cc;"></div>
<div class="r" style="left:941.25px;top:1042px;width:130px;height:47.75px;background:#fff;border:2px solid #bbbbbb;"></div>
<div class="t" style="top:1048.57px;font-size:33px;line-height:33px;color:#0d0d0d;right:2659.65px;">69</div>
<div class="t" style="top:1047.57px;font-size:33px;line-height:33px;color:#0d0d0d;right:2452.9px;">7.7236</div>
<div class="r" style="left:1299px;top:1042px;width:223px;height:48px;background:#eeeeee;border:2px solid #b6b6b6;"></div>
<div class="r" style="left:1549px;top:1042px;width:193px;height:48px;background:#eeeeee;border:2px solid #b6b6b6;"></div>
<div class="r" style="left:1769px;top:1042px;width:188px;height:48px;background:#eeeeee;border:2px solid #b6b6b6;"></div>
<div class="r" style="left:1984px;top:1042px;width:188px;height:48px;background:#eeeeee;border:2px solid #b6b6b6;"></div>
<div class="t" style="top:1048.57px;font-size:33px;line-height:33px;color:#5a5a5a;font-style:italic;right:1558.15px;">69.00</div>
<div class="r" style="left:2199px;top:1042px;width:251px;height:48px;background:#eeeeee;border:2px solid #b6b6b6;"></div>
<div class="r" style="left:2477px;top:1042px;width:223px;height:48px;background:#eeeeee;border:2px solid #b6b6b6;"></div>
<div class="r" style="left:2727px;top:1042px;width:223px;height:48px;background:#eeeeee;border:2px solid #b6b6b6;"></div>
<div class="t" style="top:1047.57px;font-size:33px;line-height:33px;color:#0d0d0d;left:2978.5px;letter-spacing:0.15px;">Investing</div>
<div class="t" style="top:1047.57px;font-size:33px;line-height:33px;color:#0d0d0d;left:3246px;letter-spacing:0.15px;">Cash</div>
<div class="r" style="left:8px;top:1098px;width:3710.5px;height:59.5px;background:#d1e6b7;"></div>
<div class="r" style="left:8px;top:1157.5px;width:3710.5px;height:2px;background:#cccbcf;"></div>
<div class="t" style="top:1109.07px;font-size:33px;line-height:33px;color:#0434a0;font-weight:bold;font-style:italic;right:3648.5px;">10</div>
<div class="t" style="top:1109.07px;font-size:33px;line-height:33px;color:#0434a0;font-weight:bold;font-style:italic;left:104px;letter-spacing:0.2px;">Cryptocurrency research</div>
<div class="t" style="top:1109.07px;font-size:33px;line-height:33px;color:#0434a0;font-weight:bold;font-style:italic;right:2810.5px;">0.1796</div>
<div class="r" style="left:713.75px;top:1148px;width:200.5px;height:4.75px;background:#cdcdcd;"></div>
<div class="r" style="left:713.75px;top:1148px;width:36.01px;height:4.75px;background:#8298cc;"></div>
<div class="r" style="left:941.25px;top:1103.5px;width:130px;height:47.75px;background:#fff;border:2px solid #bbbbbb;"></div>
<div class="t" style="top:1110.07px;font-size:33px;line-height:33px;color:#0434a0;font-weight:bold;font-style:italic;right:2659.65px;">50</div>
<div class="t" style="top:1109.07px;font-size:33px;line-height:33px;color:#0434a0;font-weight:bold;font-style:italic;right:2452.9px;">3.5925</div>
<div class="r" style="left:1299px;top:1103.5px;width:223px;height:48px;background:#eeeeee;border:2px solid #b6b6b6;"></div>
<div class="r" style="left:1549px;top:1103.5px;width:193px;height:48px;background:#eeeeee;border:2px solid #b6b6b6;"></div>
<div class="r" style="left:1769px;top:1103.5px;width:188px;height:48px;background:#eeeeee;border:2px solid #b6b6b6;"></div>
<div class="r" style="left:1984px;top:1103.5px;width:188px;height:48px;background:#eeeeee;border:2px solid #b6b6b6;"></div>
<div class="r" style="left:2199px;top:1103.5px;width:251px;height:48px;background:#eeeeee;border:2px solid #b6b6b6;"></div>
<div class="r" style="left:2477px;top:1103.5px;width:223px;height:48px;background:#eeeeee;border:2px solid #b6b6b6;"></div>
<div class="t" style="top:1110.07px;font-size:33px;line-height:33px;color:#5a5a5a;font-weight:bold;font-style:italic;right:1030.15px;">50.00</div>
<div class="r" style="left:2727px;top:1103.5px;width:223px;height:48px;background:#eeeeee;border:2px solid #b6b6b6;"></div>
<div class="t" style="top:1109.07px;font-size:33px;line-height:33px;color:#0434a0;font-weight:bold;font-style:italic;left:2978.5px;letter-spacing:0.2px;">Evaluating</div>
<div class="t" style="top:1109.07px;font-size:33px;line-height:33px;color:#0434a0;font-weight:bold;font-style:italic;left:3246px;letter-spacing:0.2px;">Research</div>
<div class="r" style="left:8px;top:1159.5px;width:3710.5px;height:59.5px;background:#d1e6b7;"></div>
<div class="r" style="left:8px;top:1219px;width:3710.5px;height:2px;background:#cccbcf;"></div>
<div class="t" style="top:1170.57px;font-size:33px;line-height:33px;color:#0434a0;font-weight:bold;font-style:italic;right:3648.5px;">11</div>
<div class="t" style="top:1170.57px;font-size:33px;line-height:33px;color:#0434a0;font-weight:bold;font-style:italic;left:104px;letter-spacing:0.2px;">Legacy ATM system retirement</div>
<div class="t" style="top:1170.57px;font-size:33px;line-height:33px;color:#0434a0;font-weight:bold;font-style:italic;right:2810.5px;">0.0000</div>
<div class="r" style="left:713.75px;top:1209.5px;width:200.5px;height:4.75px;background:#cdcdcd;"></div>
<div class="r" style="left:941.25px;top:1165px;width:130px;height:47.75px;background:#fff;border:2px solid #bbbbbb;"></div>
<div class="t" style="top:1171.57px;font-size:33px;line-height:33px;color:#0434a0;font-weight:bold;font-style:italic;right:2659.65px;">8</div>
<div class="t" style="top:1170.57px;font-size:33px;line-height:33px;color:#0434a0;font-weight:bold;font-style:italic;right:2452.9px;">0.0000</div>
<div class="r" style="left:1299px;top:1165px;width:223px;height:48px;background:#eeeeee;border:2px solid #b6b6b6;"></div>
<div class="r" style="left:1549px;top:1165px;width:193px;height:48px;background:#eeeeee;border:2px solid #b6b6b6;"></div>
<div class="r" style="left:1769px;top:1165px;width:188px;height:48px;background:#eeeeee;border:2px solid #b6b6b6;"></div>
<div class="r" style="left:1984px;top:1165px;width:188px;height:48px;background:#eeeeee;border:2px solid #b6b6b6;"></div>
<div class="r" style="left:2199px;top:1165px;width:251px;height:48px;background:#eeeeee;border:2px solid #b6b6b6;"></div>
<div class="r" style="left:2477px;top:1165px;width:223px;height:48px;background:#eeeeee;border:2px solid #b6b6b6;"></div>
<div class="r" style="left:2727px;top:1165px;width:223px;height:48px;background:#eeeeee;border:2px solid #b6b6b6;"></div>
<div class="t" style="top:1171.57px;font-size:33px;line-height:33px;color:#5a5a5a;font-weight:bold;font-style:italic;right:780.15px;">8.00</div>
<div class="t" style="top:1170.57px;font-size:33px;line-height:33px;color:#0434a0;font-weight:bold;font-style:italic;left:2978.5px;letter-spacing:0.2px;">Retiring</div>
<div class="t" style="top:1170.57px;font-size:33px;line-height:33px;color:#0434a0;font-weight:bold;font-style:italic;left:3246px;letter-spacing:0.2px;">Retirement</div>
<div class="r" style="left:8px;top:1221px;width:3710.5px;height:59.5px;background:#d1e6b7;"></div>
<div class="r" style="left:8px;top:1280.5px;width:3710.5px;height:2px;background:#cccbcf;"></div>
<div class="t" style="top:1232.07px;font-size:33px;line-height:33px;color:#0434a0;font-weight:bold;font-style:italic;right:3648.5px;">1</div>
<div class="t" style="top:1232.07px;font-size:33px;line-height:33px;color:#0434a0;font-weight:bold;font-style:italic;left:104px;letter-spacing:0.2px;">Infrastructure development and su…</div>
<div class="t" style="top:1232.07px;font-size:33px;line-height:33px;color:#0434a0;font-weight:bold;font-style:italic;right:2810.5px;">0.0000</div>
<div class="r" style="left:713.75px;top:1271px;width:200.5px;height:4.75px;background:#cdcdcd;"></div>
<div class="r" style="left:941.25px;top:1226.5px;width:130px;height:47.75px;background:#fff;border:2px solid #bbbbbb;"></div>
<div class="t" style="top:1233.07px;font-size:33px;line-height:33px;color:#0434a0;font-weight:bold;font-style:italic;right:2659.65px;">88</div>
<div class="t" style="top:1232.07px;font-size:33px;line-height:33px;color:#0434a0;font-weight:bold;font-style:italic;right:2452.9px;">0.0000</div>
<div class="r" style="left:1299px;top:1226.5px;width:223px;height:48px;background:#eeeeee;border:2px solid #b6b6b6;"></div>
<div class="t" style="top:1233.07px;font-size:33px;line-height:33px;color:#5a5a5a;font-weight:bold;font-style:italic;right:2208.15px;">88.00</div>
<div class="r" style="left:1549px;top:1226.5px;width:193px;height:48px;background:#eeeeee;border:2px solid #b6b6b6;"></div>
<div class="r" style="left:1769px;top:1226.5px;width:188px;height:48px;background:#eeeeee;border:2px solid #b6b6b6;"></div>
<div class="r" style="left:1984px;top:1226.5px;width:188px;height:48px;background:#eeeeee;border:2px solid #b6b6b6;"></div>
<div class="r" style="left:2199px;top:1226.5px;width:251px;height:48px;background:#eeeeee;border:2px solid #b6b6b6;"></div>
<div class="r" style="left:2477px;top:1226.5px;width:223px;height:48px;background:#eeeeee;border:2px solid #b6b6b6;"></div>
<div class="r" style="left:2727px;top:1226.5px;width:223px;height:48px;background:#eeeeee;border:2px solid #b6b6b6;"></div>
<div class="t" style="top:1232.07px;font-size:33px;line-height:33px;color:#0434a0;font-weight:bold;font-style:italic;left:2978.5px;letter-spacing:0.2px;">Investing</div>
<div class="t" style="top:1232.07px;font-size:33px;line-height:33px;color:#0434a0;font-weight:bold;font-style:italic;left:3246px;letter-spacing:0.2px;">Infrastructure</div>
<div class="r" style="left:8px;top:1282.5px;width:3710.5px;height:59.5px;background:#d1e6b7;"></div>
<div class="r" style="left:8px;top:1342px;width:3710.5px;height:2px;background:#cccbcf;"></div>
<div class="t" style="top:1293.57px;font-size:33px;line-height:33px;color:#0434a0;font-weight:bold;font-style:italic;right:3648.5px;">12</div>
<div class="t" style="top:1293.57px;font-size:33px;line-height:33px;color:#0434a0;font-weight:bold;font-style:italic;left:104px;letter-spacing:0.2px;">Legacy core banking system retire…</div>
<div class="t" style="top:1293.57px;font-size:33px;line-height:33px;color:#0434a0;font-weight:bold;font-style:italic;right:2810.5px;">0.0000</div>
<div class="r" style="left:713.75px;top:1332.5px;width:200.5px;height:4.75px;background:#cdcdcd;"></div>
<div class="r" style="left:941.25px;top:1288px;width:130px;height:47.75px;background:#fff;border:2px solid #bbbbbb;"></div>
<div class="t" style="top:1294.57px;font-size:33px;line-height:33px;color:#0434a0;font-weight:bold;font-style:italic;right:2659.65px;">16</div>
<div class="t" style="top:1293.57px;font-size:33px;line-height:33px;color:#0434a0;font-weight:bold;font-style:italic;right:2452.9px;">0.0000</div>
<div class="r" style="left:1299px;top:1288px;width:223px;height:48px;background:#eeeeee;border:2px solid #b6b6b6;"></div>
<div class="r" style="left:1549px;top:1288px;width:193px;height:48px;background:#eeeeee;border:2px solid #b6b6b6;"></div>
<div class="r" style="left:1769px;top:1288px;width:188px;height:48px;background:#eeeeee;border:2px solid #b6b6b6;"></div>
<div class="r" style="left:1984px;top:1288px;width:188px;height:48px;background:#eeeeee;border:2px solid #b6b6b6;"></div>
<div class="r" style="left:2199px;top:1288px;width:251px;height:48px;background:#eeeeee;border:2px solid #b6b6b6;"></div>
<div class="r" style="left:2477px;top:1288px;width:223px;height:48px;background:#eeeeee;border:2px solid #b6b6b6;"></div>
<div class="r" style="left:2727px;top:1288px;width:223px;height:48px;background:#eeeeee;border:2px solid #b6b6b6;"></div>
<div class="t" style="top:1294.57px;font-size:33px;line-height:33px;color:#5a5a5a;font-weight:bold;font-style:italic;right:780.15px;">16.00</div>
<div class="t" style="top:1293.57px;font-size:33px;line-height:33px;color:#0434a0;font-weight:bold;font-style:italic;left:2978.5px;letter-spacing:0.2px;">Retiring</div>
<div class="t" style="top:1293.57px;font-size:33px;line-height:33px;color:#0434a0;font-weight:bold;font-style:italic;left:3246px;letter-spacing:0.2px;">Retirement</div>
<div class="r" style="left:8px;top:1343.75px;width:690px;height:178.75px;background:#fff;"></div>
<div class="r" style="left:703px;top:1343.75px;width:3015.5px;height:178.75px;background:#efefef;"></div>
<div class="r" style="left:8px;top:605px;width:3710.5px;height:2px;background:#f3f3f3;"></div>
<div class="r" style="left:89px;top:486px;width:2px;height:1036.5px;background:#cccbcf;"></div>
<div class="r" style="left:698px;top:486px;width:5px;height:1036.5px;background:#cccbcf;"></div>
<div class="r" style="left:927px;top:486px;width:2px;height:1036.5px;background:#cccbcf;"></div>
<div class="r" style="left:1084px;top:486px;width:2px;height:1036.5px;background:#cccbcf;"></div>
<div class="r" style="left:1284px;top:486px;width:2px;height:1036.5px;background:#cccbcf;"></div>
<div class="r" style="left:1534px;top:544px;width:2px;height:978.5px;background:#cccbcf;"></div>
<div class="r" style="left:1754px;top:544px;width:2px;height:978.5px;background:#cccbcf;"></div>
<div class="r" style="left:1969px;top:544px;width:2px;height:978.5px;background:#cccbcf;"></div>
<div class="r" style="left:2184px;top:544px;width:2px;height:978.5px;background:#cccbcf;"></div>
<div class="r" style="left:2462px;top:544px;width:2px;height:978.5px;background:#cccbcf;"></div>
<div class="r" style="left:2712px;top:544px;width:2px;height:978.5px;background:#cccbcf;"></div>
<div class="r" style="left:2962px;top:486px;width:2px;height:1036.5px;background:#cccbcf;"></div>
<div class="r" style="left:3229.5px;top:544px;width:2px;height:978.5px;background:#cccbcf;"></div>
<div class="r" style="left:8px;top:601px;width:3710.5px;height:4px;background:#cccbcf;"></div>
<div class="r" style="left:6px;top:484px;width:3712.5px;height:2px;background:#cccbcf;"></div>
<div class="r" style="left:6px;top:484px;width:2px;height:1363px;background:#cccbcf;"></div>
<div class="r" style="left:6px;top:1522.5px;width:3712.5px;height:1.5px;background:#cccbcf;"></div>
<div class="t" style="top:496.07px;font-size:33px;line-height:33px;color:#0d0d0d;left:19.9px;">ID</div>
<div class="t" style="top:498.07px;font-size:33px;line-height:33px;color:#0d0d0d;left:102.3px;">Features / enablers</div>
<div class="r" style="left:403.5px;top:503.9px;width:30.8px;height:3.9px;background:#c4c4c4;"></div>
<div class="r" style="left:403.5px;top:513px;width:30.8px;height:3.9px;background:#c4c4c4;"></div>
<div class="r" style="left:403.5px;top:522.9px;width:30.8px;height:3.9px;background:#c4c4c4;"></div>
<div class="t" style="top:498.07px;font-size:33px;line-height:33px;color:#0d0d0d;left:713.3px;">Cost of Delay</div>
<div class="r" style="left:925.5px;top:503.9px;width:1.75px;height:3.9px;background:#c4c4c4;"></div>
<div class="r" style="left:925.5px;top:513px;width:1.75px;height:3.9px;background:#c4c4c4;"></div>
<div class="r" style="left:925.5px;top:522.9px;width:1.75px;height:3.9px;background:#c4c4c4;"></div>
<div class="t" style="top:498.07px;font-size:33px;line-height:33px;color:#0d0d0d;left:939.8px;">Duration</div>
<div class="r" style="left:1080px;top:503.9px;width:4.25px;height:3.9px;background:#c4c4c4;"></div>
<div class="r" style="left:1080px;top:513px;width:4.25px;height:3.9px;background:#c4c4c4;"></div>
<div class="r" style="left:1080px;top:522.9px;width:4.25px;height:3.9px;background:#c4c4c4;"></div>
<svg class="r" style="left:1100px;top:492px" width="30" height="40" viewBox="1100 492 30 40"><rect x="1113.9" y="497.5" width="2.2" height="26" fill="#111"/><path d="M1108 516.5 L1115 525.5 L1122 516.5" fill="none" stroke="#111" stroke-width="2.2"/></svg>
<div class="t" style="top:498.07px;font-size:33px;line-height:33px;color:#0d0d0d;left:1142.4px;">WSJF</div>
<div class="r" style="left:1244.1px;top:503.9px;width:30.8px;height:3.9px;background:#c4c4c4;"></div>
<div class="r" style="left:1244.1px;top:513px;width:30.8px;height:3.9px;background:#c4c4c4;"></div>
<div class="r" style="left:1244.1px;top:522.9px;width:30.8px;height:3.9px;background:#c4c4c4;"></div>
<div class="t" style="top:498.07px;font-size:33px;line-height:33px;color:#0d0d0d;left:1298.3px;">Custom Constraints</div>
<div class="t" style="top:498.07px;font-size:33px;line-height:33px;color:#0d0d0d;left:2976.9px;">Attributes</div>
<div class="t" style="top:557.07px;font-size:33px;line-height:33px;color:#0d0d0d;left:1297px;text-decoration:line-through;text-decoration-thickness:2px;">Infrastructure</div>
<div class="r" style="left:1507.5px;top:562.9px;width:26.75px;height:3.9px;background:#b9c3cf;"></div>
<div class="r" style="left:1507.5px;top:572px;width:26.75px;height:3.9px;background:#b9c3cf;"></div>
<div class="r" style="left:1507.5px;top:581.9px;width:26.75px;height:3.9px;background:#b9c3cf;"></div>
<div class="t" style="top:557.07px;font-size:33px;line-height:33px;color:#0d0d0d;left:1546.3px;text-decoration:line-through;text-decoration-thickness:2px;">Banking</div>
<div class="r" style="left:1681.5px;top:562.9px;width:30.8px;height:3.9px;background:#b9c3cf;"></div>
<div class="r" style="left:1681.5px;top:572px;width:30.8px;height:3.9px;background:#b9c3cf;"></div>
<div class="r" style="left:1681.5px;top:581.9px;width:30.8px;height:3.9px;background:#b9c3cf;"></div>
<div class="t" style="top:557.07px;font-size:33px;line-height:33px;color:#0d0d0d;left:1768.5px;text-decoration:line-through;text-decoration-thickness:2px;">Service</div>
<div class="r" style="left:1892.5px;top:562.9px;width:30.8px;height:3.9px;background:#b9c3cf;"></div>
<div class="r" style="left:1892.5px;top:572px;width:30.8px;height:3.9px;background:#b9c3cf;"></div>
<div class="r" style="left:1892.5px;top:581.9px;width:30.8px;height:3.9px;background:#b9c3cf;"></div>
<div class="t" style="top:557.07px;font-size:33px;line-height:33px;color:#0d0d0d;left:1982.3px;text-decoration:line-through;text-decoration-thickness:2px;">Money</div>
<div class="r" style="left:2096px;top:562.9px;width:30.8px;height:3.9px;background:#b9c3cf;"></div>
<div class="r" style="left:2096px;top:572px;width:30.8px;height:3.9px;background:#b9c3cf;"></div>
<div class="r" style="left:2096px;top:581.9px;width:30.8px;height:3.9px;background:#b9c3cf;"></div>
<div class="t" style="top:557.07px;font-size:33px;line-height:33px;color:#0d0d0d;left:2199.9px;text-decoration:line-through;text-decoration-thickness:2px;">Asset protection</div>
<div class="r" style="left:2450px;top:562.9px;width:12.5px;height:3.9px;background:#b9c3cf;"></div>
<div class="r" style="left:2450px;top:572px;width:12.5px;height:3.9px;background:#b9c3cf;"></div>
<div class="r" style="left:2450px;top:581.9px;width:12.5px;height:3.9px;background:#b9c3cf;"></div>
<div class="t" style="top:557.07px;font-size:33px;line-height:33px;color:#0d0d0d;left:2474.8px;text-decoration:line-through;text-decoration-thickness:2px;">Research</div>
<div class="r" style="left:2631px;top:562.9px;width:30.8px;height:3.9px;background:#b9c3cf;"></div>
<div class="r" style="left:2631px;top:572px;width:30.8px;height:3.9px;background:#b9c3cf;"></div>
<div class="r" style="left:2631px;top:581.9px;width:30.8px;height:3.9px;background:#b9c3cf;"></div>
<div class="t" style="top:557.07px;font-size:33px;line-height:33px;color:#0d0d0d;left:2724.8px;text-decoration:line-through;text-decoration-thickness:2px;">Retirement</div>
<div class="r" style="left:2901px;top:562.9px;width:30.8px;height:3.9px;background:#b9c3cf;"></div>
<div class="r" style="left:2901px;top:572px;width:30.8px;height:3.9px;background:#b9c3cf;"></div>
<div class="r" style="left:2901px;top:581.9px;width:30.8px;height:3.9px;background:#b9c3cf;"></div>
<div class="r" style="left:2988px;top:562.9px;width:30.8px;height:3.9px;background:#b8cdb8;"></div>
<div class="r" style="left:2988px;top:572px;width:30.8px;height:3.9px;background:#b8cdb8;"></div>
<div class="r" style="left:2988px;top:581.9px;width:30.8px;height:3.9px;background:#b8cdb8;"></div>
<div class="t" style="top:557.07px;font-size:33px;line-height:33px;color:#0d0d0d;left:3030px;">Horizon</div>
<svg class="r" style="left:3178px;top:547px" width="42" height="42" viewBox="3178 547 42 42"><path d="M3181.6 550.3 L3216.8 550.3 L3216.8 554 L3204 567 L3204 585 L3194.5 585 L3194.5 567 L3181.6 554 Z" fill="#c5e3c5"/></svg>
<div class="r" style="left:3256px;top:562.9px;width:30.8px;height:3.9px;background:#b8cdb8;"></div>
<div class="r" style="left:3256px;top:572px;width:30.8px;height:3.9px;background:#b8cdb8;"></div>
<div class="r" style="left:3256px;top:581.9px;width:30.8px;height:3.9px;background:#b8cdb8;"></div>
<div class="t" style="top:557.07px;font-size:33px;line-height:33px;color:#0d0d0d;left:3297.3px;">Development Value Stream</div>
<div class="r" style="left:90px;top:1608.5px;width:3628.5px;height:60.5px;background:#f4f4f4;border-top:1px solid #e6e6e6;border-bottom:1px solid #e6e6e6;"></div>
<div class="r" style="left:90px;top:1730px;width:3628.5px;height:61.5px;background:#f4f4f4;border-top:1px solid #e6e6e6;border-bottom:1px solid #e6e6e6;"></div>
<div class="t" style="top:1558.07px;font-size:33px;line-height:33px;color:#5a5a5a;font-weight:bold;right:3024.31px;">Funded:</div>
<div class="t" style="top:1617.07px;font-size:33px;line-height:33px;color:#5a5a5a;font-weight:bold;right:3024.31px;">Total:</div>
<div class="t" style="top:1678.57px;font-size:33px;line-height:33px;color:#5a5a5a;font-weight:bold;right:3024.31px;">Min:</div>
<div class="t" style="top:1740.07px;font-size:33px;line-height:33px;color:#5a5a5a;font-weight:bold;right:3024.31px;">Max:</div>
<div class="t" style="top:1802.57px;font-size:33px;line-height:33px;color:#5a5a5a;font-weight:bold;right:3024.31px;">Surplus/<span style="color:#c62828">Shortage</span>:</div>
<div class="t" style="top:1558.07px;font-size:33px;line-height:33px;color:#5a5a5a;font-weight:bold;right:2797.15px;">5.2199</div>
<div class="t" style="top:1558.07px;font-size:33px;line-height:33px;color:#5a5a5a;font-weight:bold;right:2639.65px;">586</div>
<div class="t" style="top:1617.07px;font-size:33px;line-height:33px;color:#5a5a5a;font-weight:bold;right:2797.15px;">6.6085</div>
<div class="t" style="top:1617.07px;font-size:33px;line-height:33px;color:#5a5a5a;font-weight:bold;right:2639.65px;">736</div>
<div class="t" style="top:1558.07px;font-size:33px;line-height:33px;color:#5a5a5a;font-weight:bold;right:2189.65px;">88.00</div>
<div class="t" style="top:1617.07px;font-size:33px;line-height:33px;color:#5a5a5a;font-weight:bold;right:2189.65px;">88.00</div>
<div class="r" style="left:1286px;top:1676px;width:243px;height:50px;background:#fff;border:1.5px solid #cdcdcd;border-radius:7px;"></div>
<div class="r" style="left:1286px;top:1736px;width:243px;height:50px;background:#fff;border:1.5px solid #cdcdcd;border-radius:7px;"></div>
<div class="t" style="top:1743.57px;font-size:33px;line-height:33px;color:#0d0d0d;right:2202.25px;">120.00</div>
<div class="t" style="top:1797.07px;font-size:33px;line-height:33px;color:#5a5a5a;font-weight:bold;right:2202.15px;">32.00</div>
<div class="t" style="top:1558.07px;font-size:33px;line-height:33px;color:#5a5a5a;font-weight:bold;right:1969.65px;">265.00</div>
<div class="t" style="top:1617.07px;font-size:33px;line-height:33px;color:#5a5a5a;font-weight:bold;right:1969.65px;">265.00</div>
<div class="r" style="left:1536px;top:1676px;width:213px;height:50px;background:#fff;border:1.5px solid #cdcdcd;border-radius:7px;"></div>
<div class="r" style="left:1536px;top:1736px;width:213px;height:50px;background:#fff;border:1.5px solid #cdcdcd;border-radius:7px;"></div>
<div class="t" style="top:1743.57px;font-size:33px;line-height:33px;color:#0d0d0d;right:1982.25px;">190.00</div>
<div class="t" style="top:1797.07px;font-size:33px;line-height:33px;color:#ee0000;font-weight:bold;right:1982.15px;">-75.00</div>
<div class="t" style="top:1558.07px;font-size:33px;line-height:33px;color:#5a5a5a;font-weight:bold;right:1755.15px;">74.00</div>
<div class="t" style="top:1617.07px;font-size:33px;line-height:33px;color:#5a5a5a;font-weight:bold;right:1755.15px;">74.00</div>
<div class="r" style="left:1756px;top:1676px;width:208px;height:50px;background:#fff;border:1.5px solid #cdcdcd;border-radius:7px;"></div>
<div class="r" style="left:1756px;top:1736px;width:208px;height:50px;background:#fff;border:1.5px solid #cdcdcd;border-radius:7px;"></div>
<div class="t" style="top:1743.57px;font-size:33px;line-height:33px;color:#0d0d0d;right:1767.25px;">80.00</div>
<div class="t" style="top:1797.07px;font-size:33px;line-height:33px;color:#5a5a5a;font-weight:bold;right:1767.15px;">6.00</div>
<div class="t" style="top:1558.07px;font-size:33px;line-height:33px;color:#5a5a5a;font-weight:bold;right:1539.65px;">10.00</div>
<div class="t" style="top:1617.07px;font-size:33px;line-height:33px;color:#5a5a5a;font-weight:bold;right:1539.65px;">79.00</div>
<div class="r" style="left:1971px;top:1676px;width:208px;height:50px;background:#fff;border:1.5px solid #cdcdcd;border-radius:7px;"></div>
<div class="r" style="left:1971px;top:1736px;width:208px;height:50px;background:#fff;border:1.5px solid #cdcdcd;border-radius:7px;"></div>
<div class="t" style="top:1743.57px;font-size:33px;line-height:33px;color:#0d0d0d;right:1552.25px;">80.00</div>
<div class="t" style="top:1797.07px;font-size:33px;line-height:33px;color:#5a5a5a;font-weight:bold;right:1552.15px;">70.00</div>
<div class="t" style="top:1558.07px;font-size:33px;line-height:33px;color:#5a5a5a;font-weight:bold;right:1262.15px;">0.00</div>
<div class="t" style="top:1617.07px;font-size:33px;line-height:33px;color:#5a5a5a;font-weight:bold;right:1262.15px;">81.00</div>
<div class="r" style="left:2186px;top:1676px;width:271px;height:50px;background:#fff;border:1.5px solid #cdcdcd;border-radius:7px;"></div>
<div class="r" style="left:2186px;top:1736px;width:271px;height:50px;background:#fff;border:1.5px solid #cdcdcd;border-radius:7px;"></div>
<div class="t" style="top:1743.57px;font-size:33px;line-height:33px;color:#0d0d0d;right:1274.25px;">100.00</div>
<div class="t" style="top:1797.07px;font-size:33px;line-height:33px;color:#5a5a5a;font-weight:bold;right:1274.15px;">100.00</div>
<div class="t" style="top:1558.07px;font-size:33px;line-height:33px;color:#5a5a5a;font-weight:bold;right:1012.65px;">125.00</div>
<div class="t" style="top:1617.07px;font-size:33px;line-height:33px;color:#5a5a5a;font-weight:bold;right:1012.65px;">125.00</div>
<div class="r" style="left:2464px;top:1676px;width:243px;height:50px;background:#fff;border:1.5px solid #cdcdcd;border-radius:7px;"></div>
<div class="r" style="left:2464px;top:1736px;width:243px;height:50px;background:#fff;border:1.5px solid #cdcdcd;border-radius:7px;"></div>
<div class="t" style="top:1743.57px;font-size:33px;line-height:33px;color:#0d0d0d;right:1024.25px;">80.00</div>
<div class="t" style="top:1797.07px;font-size:33px;line-height:33px;color:#ee0000;font-weight:bold;right:1024.15px;">-45.00</div>
<div class="t" style="top:1558.07px;font-size:33px;line-height:33px;color:#5a5a5a;font-weight:bold;right:762.65px;">24.00</div>
<div class="t" style="top:1617.07px;font-size:33px;line-height:33px;color:#5a5a5a;font-weight:bold;right:762.65px;">24.00</div>
<div class="r" style="left:2714px;top:1676px;width:243px;height:50px;background:#fff;border:1.5px solid #cdcdcd;border-radius:7px;"></div>
<div class="r" style="left:2714px;top:1736px;width:243px;height:50px;background:#fff;border:1.5px solid #cdcdcd;border-radius:7px;"></div>
<div class="t" style="top:1743.57px;font-size:33px;line-height:33px;color:#0d0d0d;right:774.25px;">40.00</div>
<div class="t" style="top:1797.07px;font-size:33px;line-height:33px;color:#5a5a5a;font-weight:bold;right:774.15px;">16.00</div>
<svg class="r" style="left:0;top:0;overflow:visible" width="3725" height="1852" viewBox="0 0 3725 1852"><defs><filter id="sh" x="-20%" y="-20%" width="140%" height="140%"><feDropShadow dx="1.5" dy="2" stdDeviation="2" flood-color="#000" flood-opacity="0.35"/></filter></defs><g filter="url(#sh)" fill="none" stroke="#ee3d40" stroke-width="3.8"><ellipse cx="188" cy="171.9" rx="74.7" ry="67.6"/><ellipse cx="658.3" cy="1744.5" rx="79.7" ry="40.8"/><ellipse cx="543.4" cy="1808.6" rx="174.1" ry="36.4"/></g></svg>
<div class="r" style="left:3px;top:3px;width:3717px;height:9px;background:linear-gradient(#c8c8c8, rgba(255,255,255,0));"></div>
<div class="r" style="left:3px;top:3px;width:6px;height:481px;background:linear-gradient(90deg, #dcdcdc, rgba(255,255,255,0));"></div>
<div class="r" style="left:3px;top:484px;width:3px;height:1363px;background:#e8e8e8;"></div>
<div class="r" style="left:0px;top:0px;width:3725px;height:3px;background:#000;"></div>
<div class="r" style="left:0px;top:0px;width:3px;height:1852px;background:#000;"></div>
<div class="r" style="left:3720px;top:0px;width:5px;height:1852px;background:#000;"></div>
<div class="r" style="left:0px;top:1847px;width:3725px;height:3px;background:#000;"></div>
<div class="r" style="left:0px;top:1850px;width:3720px;height:2px;background:#cfcfcf;"></div>
</body></html>
